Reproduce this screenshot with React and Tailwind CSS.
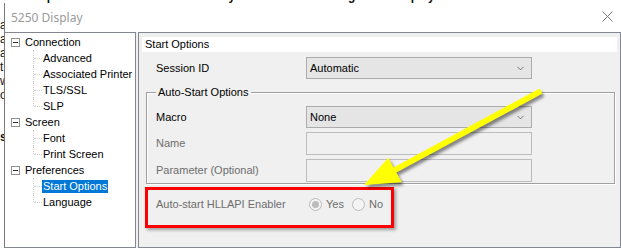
import { ChevronDown } from 'lucide-react'

const tree = [
  { label: 'Connection', children: ['Advanced', 'Associated Printer', 'TLS/SSL', 'SLP'] },
  { label: 'Screen', children: ['Font', 'Print Screen'] },
  { label: 'Preferences', children: ['Start Options', 'Language'] },
]

function Expander() {
  return (
    <span className="ml-[6px] flex h-[9px] w-[9px] items-center justify-center border border-[#919191] bg-white">
      <span className="h-px w-[5px] bg-[#333]" />
    </span>
  )
}

function TreeGroup({ node }) {
  return (
    <div>
      <div className="flex h-[16px] items-center">
        <Expander />
        <span className="ml-[5px]">{node.label}</span>
      </div>
      <div>
        {node.children.map((child, i) => (
          <div key={child} className="relative flex h-[16px] items-center pl-[38px]">
            <span
              className={
                i === node.children.length - 1
                  ? 'absolute left-[28px] top-0 h-[8px] border-l border-dotted border-[#cfcfcf]'
                  : 'absolute left-[28px] top-0 h-[16px] border-l border-dotted border-[#cfcfcf]'
              }
            />
            <span className="absolute left-[29px] top-[8px] w-[8px] border-t border-dotted border-[#cfcfcf]" />
            {child === 'Start Options' ? (
              <span className="-ml-px bg-[#0078d7] px-px leading-[13px] text-white">{child}</span>
            ) : (
              <span>{child}</span>
            )}
          </div>
        ))}
      </div>
    </div>
  )
}

function Select({ value }) {
  return (
    <div className="flex h-[22px] w-[226px] items-center justify-between border border-[#acacac] bg-[#e5e5e5] pl-[3px] pr-[5px] text-black">
      <span>{value}</span>
      <ChevronDown size={11} strokeWidth={1.5} className="text-[#444]" />
    </div>
  )
}

function TextBox() {
  return <div className="h-[23px] w-[226px] border border-[#bcbcbc] bg-[#f0f0f0]" />
}

function Radio({ checked, label }) {
  return (
    <label className="flex items-center gap-[4px] text-[#6d6d6d]">
      <span className="flex h-[13px] w-[13px] items-center justify-center rounded-full border border-[#bcbcbc] bg-[#f4f4f4]">
        {checked && <span className="h-[7px] w-[7px] rounded-full bg-[#bcbcbc]" />}
      </span>
      {label}
    </label>
  )
}

export default function App() {
  return (
    <div className="relative h-[248px] w-[621px] overflow-hidden bg-white font-['Liberation_Sans',Arial,sans-serif] text-[11px] text-black">
      {/* page behind the dialog */}
      <div className="h-[3px] overflow-hidden">
        <div className="-mt-[10px] whitespace-nowrap pl-[2px] text-[12px] font-bold leading-[13px] text-[#111]">
          landscape Windows environment is easy to create and manage new Display and Printer sessions. 5250 Session in Windows
        </div>
      </div>
      <div className="flex h-[245px]">
        <div className="w-[4px] overflow-hidden pt-[15px] text-[12px] leading-[14px] text-[#111]">
          <div>a</div>
          <div>a</div>
          <div>a</div>
          <div>t</div>
          <div>w</div>
          <div>o</div>
          <div>&nbsp;</div>
          <div>&nbsp;</div>
          <div className="font-bold">s</div>
        </div>

        {/* dialog */}
        <div className="flex flex-1 flex-col border-l border-[#7a7a7a]">
          <div className="flex h-[29px] items-center justify-between bg-white pl-[6px] pr-[8px]">
            <span className="font-['Noto_Sans',sans-serif] text-[12px] text-[#9a9a9a]">5250 Display</span>
            <svg width="11" height="11" viewBox="0 0 11 11" className="mb-[2px]">
              <path d="M0.5 0.5L10.5 10.5M10.5 0.5L0.5 10.5" stroke="#777" strokeWidth="1" />
            </svg>
          </div>

          <div className="flex flex-1 gap-[2px] bg-[#f0f0f0]">
            {/* tree */}
            <div className="w-[131px] border-y border-r border-[#828790] bg-white pt-px">
              {tree.map(node => (
                <TreeGroup key={node.label} node={node} />
              ))}
            </div>

            {/* options panel */}
            <div className="flex-1 border border-[#828790] bg-[#f0f0f0]">
              <div className="mx-[3px] mt-[4px] h-[15px] bg-white pl-[3px] leading-[15px]">Start Options</div>

              <div className="mt-[5px] flex items-center pl-[17px]">
                <span className="w-[150px]">Session ID</span>
                <Select value="Automatic" />
              </div>

              <div className="ml-[7px] mr-[5px] mt-[13px] border border-[#a0a0a0] pb-px shadow-[1px_1px_0_#fff,inset_1px_1px_0_#fff]">
                <div className="ml-[9px] -mt-[7px] w-fit bg-[#f0f0f0] px-[2px] leading-[13px]">Auto-Start Options</div>
                <div className="mt-[7px] flex items-center pl-[9px]">
                  <span className="w-[150px]">Macro</span>
                  <Select value="None" />
                </div>
                <div className="mt-[4px] flex items-center pl-[9px] text-[#6d6d6d]">
                  <span className="w-[150px]">Name</span>
                  <TextBox />
                </div>
                <div className="mt-[4px] flex items-center pl-[9px] text-[#6d6d6d]">
                  <span className="w-[150px]">Parameter (Optional)</span>
                  <TextBox />
                </div>
              </div>

              <div className="mt-px flex h-[38px] items-center pl-[17px] text-[#6d6d6d]">
                <span className="w-[153px]">Auto-start HLLAPI Enabler</span>
                <div className="flex items-center gap-[8px]">
                  <Radio checked label="Yes" />
                  <Radio label="No" />
                </div>
              </div>
            </div>
          </div>
        </div>
      </div>

      {/* annotation: red frame */}
      <div className="absolute left-[145px] top-[187px] h-[41px] w-[249px] border-[3px] border-[#ff0000] shadow-[2px_2px_3px_rgba(0,0,0,0.35)]" />

      {/* annotation: yellow arrow */}
      <svg className="pointer-events-none absolute left-0 top-0" width="621" height="248" viewBox="0 0 621 248">
        <defs>
          <filter id="arrowShadow" x="-10%" y="-10%" width="130%" height="130%">
            <feGaussianBlur stdDeviation="1.5" />
          </filter>
        </defs>
        <polygon
          points="539.6,88.4 393.6,167.4 388.3,157.7 364,185 401.7,182.3 396.4,172.6 542.4,93.6"
          fill="rgba(0,0,0,0.45)"
          transform="translate(2 3)"
          filter="url(#arrowShadow)"
        />
        <polygon
          points="539.6,88.4 393.6,167.4 388.3,157.7 364,185 401.7,182.3 396.4,172.6 542.4,93.6"
          fill="#ffff00"
        />
      </svg>
    </div>
  )
}
